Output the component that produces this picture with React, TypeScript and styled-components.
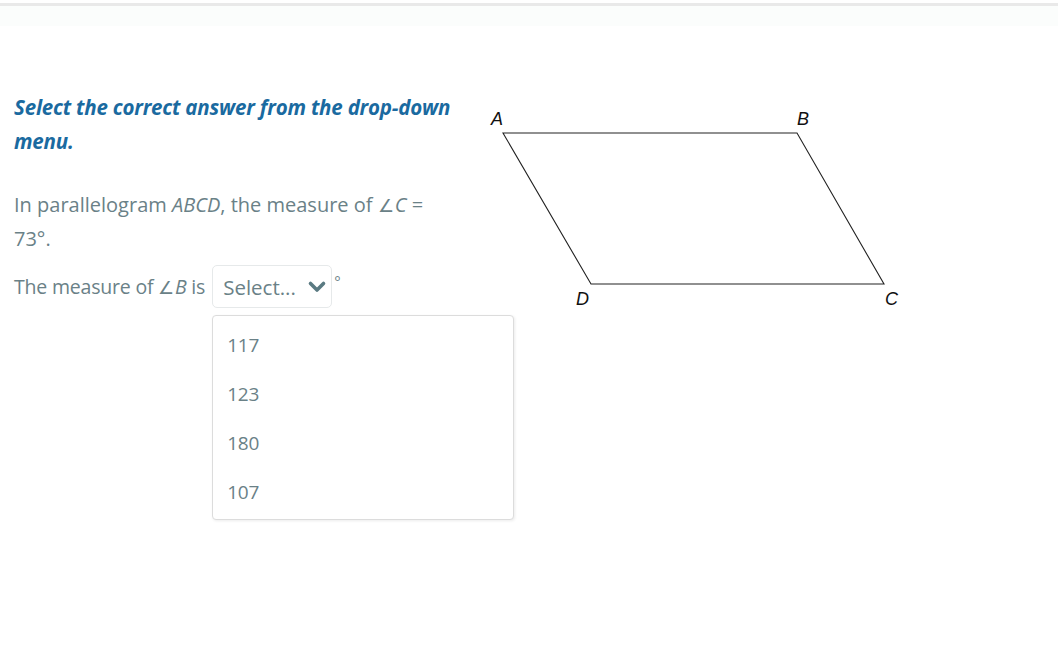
import styled, { createGlobalStyle } from 'styled-components';

const GlobalStyle = createGlobalStyle`
  html, body, #root {
    height: 100%;
  }
  body {
    margin: 0;
    background: #fff;
    font-family: 'Open Sans', 'Liberation Sans', sans-serif;
  }
`;

const Shell = styled.div`
  min-height: 100%;
  padding-top: 3px;
  box-sizing: border-box;
`;

const TopBar = styled.div`
  height: 20px;
  border-top: 3px solid #e9e9e9;
  background: #fbfdfc;
`;

const Page = styled.div`
  display: flex;
  align-items: flex-start;
  padding: 64px 0 0 14px;
`;

const Question = styled.div`
  width: 442px;
  flex-shrink: 0;
`;

const Instruction = styled.h2`
  margin: 0 0 30px;
  font-size: 20.5px;
  line-height: 34px;
  font-weight: 700;
  font-style: italic;
  color: #1a6aa0;
  letter-spacing: -0.2px;
`;

const Para = styled.p`
  margin: 0 0 10px;
  font-size: 20px;
  line-height: 33px;
  color: #6a8187;
`;

const Var = styled.i`
  font-style: italic;
`;

const Angle = styled.span`
  font-size: 0.9em;
  margin-right: 1px;
`;

const AnswerRow = styled.div`
  display: flex;
  align-items: center;
  font-size: 19.5px;
  color: #6a8187;
  letter-spacing: -0.2px;
`;

const SelectWrap = styled.div`
  position: relative;
  margin-left: 7px;
`;

const SelectBox = styled.div`
  box-sizing: border-box;
  width: 120px;
  height: 43px;
  display: flex;
  align-items: center;
  justify-content: space-between;
  padding: 0 4px 0 10px;
  border: 1.5px solid #e6e9ea;
  border-radius: 5px;
  font-size: 20.5px;
  letter-spacing: 0;
  color: #6a8187;
`;

const Degree = styled.span`
  align-self: flex-start;
  margin: 9px 0 0 2px;
  font-size: 15px;
  line-height: 15px;
`;

const Menu = styled.ul`
  position: absolute;
  top: 50px;
  left: 0;
  box-sizing: border-box;
  width: 302px;
  margin: 0;
  padding: 5px 0 2px;
  list-style: none;
  background: #fff;
  border: 1px solid #dcdcdc;
  border-radius: 4px;
  box-shadow: 1px 1px 3px rgba(0, 0, 0, 0.08);
`;

const Option = styled.li`
  height: 49px;
  padding-left: 14px;
  font-size: 19px;
  line-height: 49px;
  color: #6a8187;
`;

const Figure = styled.div`
  margin: 11px 0 0 32px;
`;

const Chevron = () => (
  <svg width="20" height="18" viewBox="0 0 20 18">
    <path
      d="M3.5 5.5 L10 12 L16.5 5.5"
      fill="none"
      stroke="#5a7a82"
      strokeWidth="3.6"
      strokeLinecap="round"
      strokeLinejoin="round"
    />
  </svg>
);

const Parallelogram = () => (
  <svg width="420" height="210" viewBox="0 0 420 210">
    <polygon
      points="15,32 309,32 396,183 103,183"
      fill="none"
      stroke="#222"
      strokeWidth="1.1"
    />
    <g
      fontFamily="'Liberation Sans', Arial, sans-serif"
      fontSize="18"
      fontStyle="italic"
      fill="#111"
    >
      <text x="3" y="24">A</text>
      <text x="309" y="24">B</text>
      <text x="88" y="204">D</text>
      <text x="397" y="204">C</text>
    </g>
  </svg>
);

const options = ['117', '123', '180', '107'];

const App = () => (
  <Shell>
    <GlobalStyle />
    <TopBar />
    <Page>
      <Question>
        <Instruction>Select the correct answer from the drop-down menu.</Instruction>
        <Para>
          In parallelogram <Var>ABCD</Var>, the measure of <Angle>∠</Angle>
          <Var>C</Var> = 73°.
        </Para>
        <AnswerRow>
          The measure of&nbsp;<Angle>∠</Angle>
          <Var>B</Var>&nbsp;is
          <SelectWrap>
            <SelectBox>
              Select...
              <Chevron />
            </SelectBox>
            <Menu>
              {options.map(o => (
                <Option key={o}>{o}</Option>
              ))}
            </Menu>
          </SelectWrap>
          <Degree>°</Degree>
        </AnswerRow>
      </Question>
      <Figure>
        <Parallelogram />
      </Figure>
    </Page>
  </Shell>
);

export default App;
